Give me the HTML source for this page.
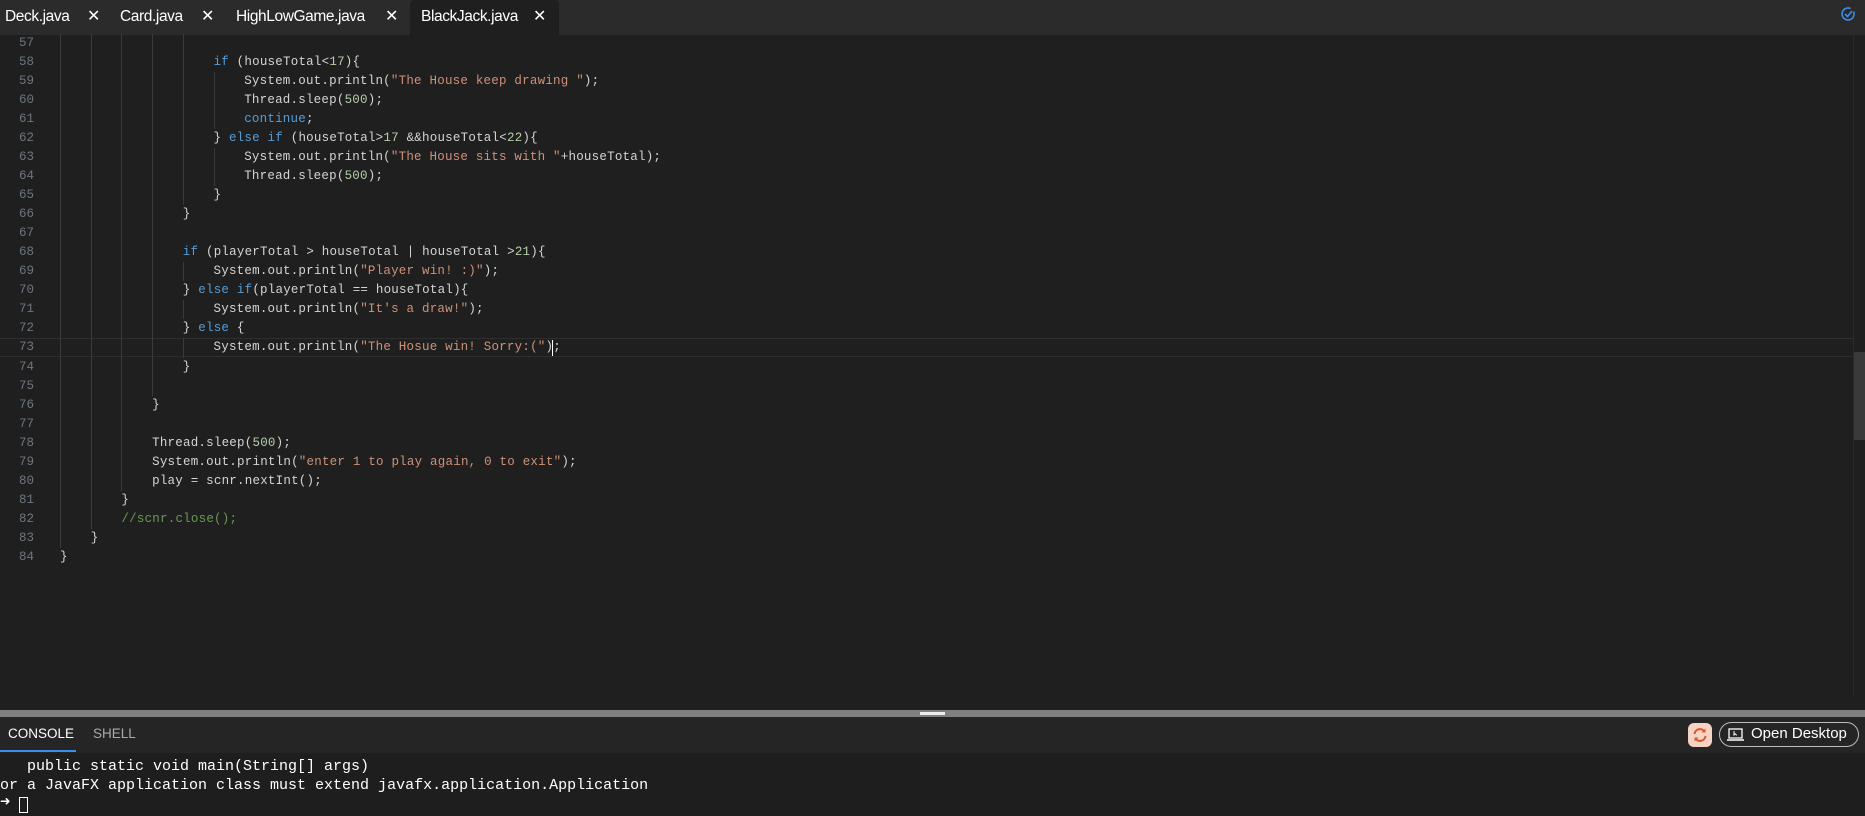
<!DOCTYPE html>
<html><head><meta charset="utf-8"><style>
*{margin:0;padding:0;box-sizing:border-box}
body{width:1865px;height:816px;background:#1f1f1f;overflow:hidden;position:relative;font-family:"Liberation Sans",sans-serif}
#tabs{position:absolute;left:0;top:0;width:1865px;height:35px;background:#2b2b2b}
.tab{position:absolute;top:0;height:35px;line-height:33px;color:#fff;font-size:15.5px;letter-spacing:-0.4px}
.x{position:absolute;top:0;height:35px;line-height:34px;color:#fff;font-size:16px}
#active{position:absolute;left:410px;top:0;width:149px;height:35px;background:#1f1f1f;border-radius:4px 4px 0 0}
.ln{position:absolute;left:0;width:34px;text-align:right;font-family:"Liberation Mono",monospace;font-size:12.5px;color:#6e7681;height:19px;line-height:19px}
.code{position:absolute;font-family:"Liberation Mono",monospace;font-size:12.5px;letter-spacing:0.22px;color:#d4d4d4;white-space:pre;height:19px;line-height:19px}
.g{position:absolute;width:1px;background:#3a3a3a;height:19.06px}
.k{color:#569cd6}.s{color:#ce9178}.n{color:#b5cea8}.c{color:#6a9955}
#cl{position:absolute;left:0;width:1853px;height:19px;border-top:1px solid #2e2e2e;border-bottom:1px solid #2e2e2e}
#bar{position:absolute;left:0;top:710px;width:1865px;height:7px;background:#808080}
#ctabs{position:absolute;left:0;top:717px;width:1865px;height:36px;background:#252526}
#cons{position:absolute;left:0;top:753px;width:1865px;height:63px;background:#1e1e1e}
.ct{position:absolute;font-family:"Liberation Mono",monospace;font-size:15px;color:#fff;white-space:pre;line-height:18px}
</style></head><body>
<div id="tabs">
<div id="active"></div>
<div class="tab" style="left:5px">Deck.java</div><div class="x" style="left:87px">✕</div>
<div class="tab" style="left:120px">Card.java</div><div class="x" style="left:201px">✕</div>
<div class="tab" style="left:236px">HighLowGame.java</div><div class="x" style="left:385px">✕</div>
<div class="tab" style="left:421px">BlackJack.java</div><div class="x" style="left:533px">✕</div>
<svg style="position:absolute;left:1840px;top:6px" width="16" height="16" viewBox="0 0 16 16"><path d="M13.5 5.5A6 6 0 1 1 10.5 2.5" fill="none" stroke="#3b8eea" stroke-width="1.6"/><path d="M5 8l2.5 2.5L12 5" fill="none" stroke="#3b8eea" stroke-width="1.6"/></svg>
</div>
<div id="cl" style="top:338px"></div>
<div style="position:absolute;left:1853px;top:35px;width:12px;height:662px;background:#1f1f1f;border-left:1px solid #2a2a2a"></div>
<div style="position:absolute;left:1854px;top:352px;width:11px;height:88px;background:#3a3a3a"></div>
<div id="g"></div>
<div id="code"></div>
<div style="position:absolute;left:552px;top:340px;width:1px;height:16px;background:#fff"></div>
<div id="bar"><div style="position:absolute;left:920px;top:2px;width:25px;height:3px;background:#eee"></div></div>
<div id="ctabs">
<div style="position:absolute;left:8px;top:9px;color:#fff;font-size:13.5px">CONSOLE</div>
<div style="position:absolute;left:0;top:33px;width:76px;height:2px;background:#3b8eea"></div>
<div style="position:absolute;left:93px;top:9px;color:#aaa;font-size:13.5px">SHELL</div>
<div style="position:absolute;left:1688px;top:6px;width:24px;height:24px;background:#f7d3c6;border-radius:6px"></div>
<svg style="position:absolute;left:1692px;top:10px" width="16" height="16" viewBox="0 0 16 16"><path d="M2.5 7A5.5 5.5 0 0 1 12.5 4.5M13.5 9A5.5 5.5 0 0 1 3.5 11.5" fill="none" stroke="#d9582b" stroke-width="2"/><path d="M13.5 1.5v4h-4zM2.5 14.5v-4h4z" fill="#d9582b"/></svg>
<div style="position:absolute;left:1719px;top:5px;width:140px;height:25px;border:1px solid #bbb;border-radius:13px"></div>
<svg style="position:absolute;left:1727px;top:11px" width="17" height="14" viewBox="0 0 17 14"><rect x="2" y="1" width="13" height="9" fill="none" stroke="#fff" stroke-width="1.3"/><path d="M0 12h17" stroke="#fff" stroke-width="1.4"/><path d="M7 3l0 4 1.2-1.2 1.5 1.6" stroke="#fff" fill="none"/></svg>
<div style="position:absolute;left:1751px;top:8px;color:#fff;font-size:15px">Open Desktop</div>
</div>
<div id="cons">
<div class="ct" style="left:0;top:5px">   public static void main(String[] args)</div>
<div class="ct" style="left:0;top:24px">or a JavaFX application class must extend javafx.application.Application</div>
<div class="ct" style="left:0;top:42px;font-weight:bold;font-size:17px">➜</div>
<div style="position:absolute;left:19px;top:44px;width:9px;height:16px;border:1px solid #fff"></div>
</div>
<script>
var L=[
[57,null,"",[0,1,2,3,4]],
[58,5,'<span class="k">if</span> (houseTotal&lt;<span class="n">17</span>){',[0,1,2,3,4]],
[59,6,'System.out.println(<span class="s">"The House keep drawing "</span>);',[0,1,2,3,4,5]],
[60,6,'Thread.sleep(<span class="n">500</span>);',[0,1,2,3,4,5]],
[61,6,'<span class="k">continue</span>;',[0,1,2,3,4,5]],
[62,5,'} <span class="k">else if</span> (houseTotal&gt;<span class="n">17</span> &amp;&amp;houseTotal&lt;<span class="n">22</span>){',[0,1,2,3,4]],
[63,6,'System.out.println(<span class="s">"The House sits with "</span>+houseTotal);',[0,1,2,3,4,5]],
[64,6,'Thread.sleep(<span class="n">500</span>);',[0,1,2,3,4,5]],
[65,5,'}',[0,1,2,3,4]],
[66,4,'}',[0,1,2,3]],
[67,null,'',[0,1,2,3]],
[68,4,'<span class="k">if</span> (playerTotal &gt; houseTotal | houseTotal &gt;<span class="n">21</span>){',[0,1,2,3]],
[69,5,'System.out.println(<span class="s">"Player win! :)"</span>);',[0,1,2,3,4]],
[70,4,'} <span class="k">else if</span>(playerTotal == houseTotal){',[0,1,2,3]],
[71,5,'System.out.println(<span class="s">"It\'s a draw!"</span>);',[0,1,2,3,4]],
[72,4,'} <span class="k">else</span> {',[0,1,2,3]],
[73,5,'System.out.println(<span class="s">"The Hosue win! Sorry:("</span>);',[0,1,2,3,4]],
[74,4,'}',[0,1,2,3]],
[75,null,'',[0,1,2,3]],
[76,3,'}',[0,1,2]],
[77,null,'',[0,1,2]],
[78,3,'Thread.sleep(<span class="n">500</span>);',[0,1,2]],
[79,3,'System.out.println(<span class="s">"enter 1 to play again, 0 to exit"</span>);',[0,1,2]],
[80,3,'play = scnr.nextInt();',[0,1,2]],
[81,2,'}',[0,1]],
[82,2,'<span class="c">//scnr.close();</span>',[0,1]],
[83,1,'}',[0]],
[84,0,'}',[]]
];
var h="",g="";
L.forEach(function(r,i){
 var top=33.5+i*19.06;
 h+='<div class="ln" style="top:'+top+'px">'+r[0]+'</div>';
 if(r[1]!==null)h+='<div class="code" style="left:'+(60+r[1]*30.7)+'px;top:'+top+'px">'+r[2]+'</div>';
 r[3].forEach(function(l){g+='<div class="g" style="left:'+(60+l*30.7)+'px;top:'+top+'px"></div>';});
});
document.getElementById('code').innerHTML=h;
document.getElementById('g').innerHTML=g;
</script>
</body></html>
